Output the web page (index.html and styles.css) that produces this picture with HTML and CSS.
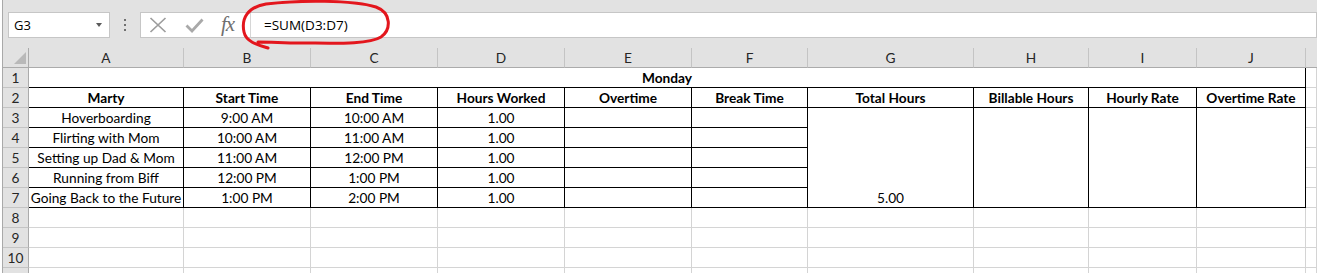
FILE: index.html
```html
<!DOCTYPE html>
<html lang="en">
<head>
    <meta charset="UTF-8">
    <title>Monday timesheet</title>
    <link rel="stylesheet" href="styles.css">
</head>
<body>
    <div class="app">
        <div class="toolbar">
            <div class="name-box">
                <span>G3</span>
                <span class="drop"></span>
            </div>
            <div class="dots"><i></i><i></i><i></i></div>
            <div class="fx-box">
                <svg class="ico-x" width="18" height="16" viewBox="0 0 18 16">
                    <path d="M1.5 1 L16.5 15 M16.5 1 L1.5 15" stroke="#9d9d9d" stroke-width="1.7" fill="none"/>
                </svg>
                <svg class="ico-ok" width="19" height="15" viewBox="0 0 19 15">
                    <path d="M1.5 7.5 L7 13 L17.5 1.5" stroke="#a9a9a9" stroke-width="2.8" fill="none"/>
                </svg>
                <span class="fx">fx</span>
            </div>
            <div class="formula">=SUM(D3:D7)</div>
        </div>

        <div class="sheet">
            <div class="corner">
                <svg width="12" height="12" viewBox="0 0 12 12"><polygon points="12,0 12,12 0,12" fill="#b9b9b9"/></svg>
            </div>
            <div class="col-hd">A</div>
            <div class="col-hd">B</div>
            <div class="col-hd">C</div>
            <div class="col-hd">D</div>
            <div class="col-hd">E</div>
            <div class="col-hd">F</div>
            <div class="col-hd">G</div>
            <div class="col-hd">H</div>
            <div class="col-hd">I</div>
            <div class="col-hd">J</div>
            <div class="col-hd last"></div>

            <!-- row 1 -->
            <div class="row-hd">1</div>
            <div class="cell title">Monday</div>
            <div class="cell"></div>

            <!-- row 2 -->
            <div class="row-hd">2</div>
            <div class="cell box bold">Marty</div>
            <div class="cell box bold">Start Time</div>
            <div class="cell box bold">End Time</div>
            <div class="cell box bold">Hours Worked</div>
            <div class="cell box bold">Overtime</div>
            <div class="cell box bold">Break Time</div>
            <div class="cell box bold">Total Hours</div>
            <div class="cell box bold">Billable Hours</div>
            <div class="cell box bold">Hourly Rate</div>
            <div class="cell box bold">Overtime Rate</div>
            <div class="cell"></div>

            <!-- row 3 -->
            <div class="row-hd">3</div>
            <div class="cell box">Hoverboarding</div>
            <div class="cell box">9:00 AM</div>
            <div class="cell box">10:00 AM</div>
            <div class="cell box">1.00</div>
            <div class="cell box"></div>
            <div class="cell box"></div>
            <div class="cell box merged total">5.00</div>
            <div class="cell box merged"></div>
            <div class="cell box merged"></div>
            <div class="cell box merged"></div>
            <div class="cell"></div>

            <!-- row 4 -->
            <div class="row-hd">4</div>
            <div class="cell box">Flirting with Mom</div>
            <div class="cell box">10:00 AM</div>
            <div class="cell box">11:00 AM</div>
            <div class="cell box">1.00</div>
            <div class="cell box"></div>
            <div class="cell box"></div>
            <div class="cell k"></div>

            <!-- row 5 -->
            <div class="row-hd">5</div>
            <div class="cell box">Setting up Dad &amp; Mom</div>
            <div class="cell box">11:00 AM</div>
            <div class="cell box">12:00 PM</div>
            <div class="cell box">1.00</div>
            <div class="cell box"></div>
            <div class="cell box"></div>
            <div class="cell k"></div>

            <!-- row 6 -->
            <div class="row-hd">6</div>
            <div class="cell box">Running from Biff</div>
            <div class="cell box">12:00 PM</div>
            <div class="cell box">1:00 PM</div>
            <div class="cell box">1.00</div>
            <div class="cell box"></div>
            <div class="cell box"></div>
            <div class="cell k"></div>

            <!-- row 7 -->
            <div class="row-hd">7</div>
            <div class="cell box">Going Back to the Future</div>
            <div class="cell box">1:00 PM</div>
            <div class="cell box">2:00 PM</div>
            <div class="cell box">1.00</div>
            <div class="cell box"></div>
            <div class="cell box"></div>
            <div class="cell k"></div>

            <!-- rows 8 - 11 -->
            <div class="row-hd">8</div>
            <div class="cell"></div><div class="cell"></div><div class="cell"></div><div class="cell"></div><div class="cell"></div>
            <div class="cell"></div><div class="cell"></div><div class="cell"></div><div class="cell"></div><div class="cell"></div><div class="cell"></div>

            <div class="row-hd">9</div>
            <div class="cell"></div><div class="cell"></div><div class="cell"></div><div class="cell"></div><div class="cell"></div>
            <div class="cell"></div><div class="cell"></div><div class="cell"></div><div class="cell"></div><div class="cell"></div><div class="cell"></div>

            <div class="row-hd">10</div>
            <div class="cell"></div><div class="cell"></div><div class="cell"></div><div class="cell"></div><div class="cell"></div>
            <div class="cell"></div><div class="cell"></div><div class="cell"></div><div class="cell"></div><div class="cell"></div><div class="cell"></div>

            <div class="row-hd"></div>
            <div class="cell"></div><div class="cell"></div><div class="cell"></div><div class="cell"></div><div class="cell"></div>
            <div class="cell"></div><div class="cell"></div><div class="cell"></div><div class="cell"></div><div class="cell"></div><div class="cell"></div>
        </div>

        <!-- hand drawn annotation round the formula -->
        <svg class="scribble" width="420" height="60" viewBox="0 0 420 60">
            <path d="M268 48 C258 45 246 42 244 32 C241 18 248 7 266 4 C300 0 352 0 376 7 C392 13 391 30 381 37 C368 45 330 43 300 43 C284 43 272 42 258 42"
                  stroke="#e3161d" stroke-width="3" fill="none" stroke-linecap="round"/>
        </svg>
    </div>
</body>
</html>
```

FILE: styles.css
```css
body {
    margin: 0;
    background: #fff;
    overflow: hidden;
}
.app {
    position: relative;
    margin-left: 2px;
    border-left: 1px solid #a9a9a9;
    height: 273px;
    overflow: hidden;
    background: #e2e2e2;
}
.toolbar {
    height: 48px;
    display: flex;
    align-items: flex-start;
    padding-top: 12px;
    padding-left: 5px;
    box-sizing: border-box;
}
.name-box {
    width: 102px;
    height: 26px;
    box-sizing: border-box;
    background: #fff;
    border: 1px solid #c6c6c6;
    display: flex;
    align-items: center;
    justify-content: space-between;
    padding: 0 7px 0 5px;
    font-family: "Open Sans", sans-serif;
    font-size: 13px;
    color: #000;
}
.drop {
    width: 0;
    height: 0;
    border-left: 3.5px solid transparent;
    border-right: 3.5px solid transparent;
    border-top: 4px solid #5a5a5a;
}
.dots {
    width: 30px;
    height: 26px;
    display: flex;
    flex-direction: column;
    align-items: center;
    justify-content: center;
    gap: 3px;
}
.dots i {
    display: block;
    width: 2px;
    height: 2px;
    background: #707070;
}
.fx-box {
    width: 111px;
    height: 26px;
    box-sizing: border-box;
    background: #fff;
    border: 1px solid #c6c6c6;
    border-right: 1px solid #d6d6d6;
    display: flex;
    align-items: center;
    padding-left: 8px;
}
.ico-x {
    margin-right: 18px;
}
.ico-ok {
    margin-right: 17px;
    margin-top: 1px;
}
.fx {
    font-family: "Liberation Serif", serif;
    font-style: italic;
    font-size: 21px;
    color: #6f6f6f;
    letter-spacing: -1px;
    margin-top: -2px;
}
.formula {
    flex: 1;
    height: 26px;
    box-sizing: border-box;
    background: #fff;
    border: 1px solid #c6c6c6;
    border-left: none;
    padding-left: 13px;
    font-family: "Open Sans", sans-serif;
    font-size: 13.5px;
    line-height: 24px;
    color: #000;
}

.sheet {
    display: grid;
    grid-template-columns: 26px 155px 127px 127px 127px 127px 116px 166px 115px 108px 109px 1fr;
    grid-auto-rows: 20px;
    background: #fff;
    font-family: Lato, "Liberation Sans", sans-serif;
    font-size: 13.7px;
    color: #000;
}
.sheet > div {
    box-sizing: border-box;
}
.corner {
    background: #e2e2e2;
    border-right: 1px solid #ababab;
    border-bottom: 1px solid #ababab;
    display: flex;
    align-items: flex-end;
    justify-content: flex-end;
    padding: 0 2px 3px 0;
}
.col-hd {
    background: #e2e2e2;
    border-right: 1px solid #c4c4c4;
    border-bottom: 1px solid #ababab;
    text-align: center;
    line-height: 19px;
    color: #262626;
}
.col-hd.last {
    border-right: none;
}
.row-hd {
    background: #e2e2e2;
    border-right: 1px solid #ababab;
    border-bottom: 1px solid #c4c4c4;
    text-align: center;
    line-height: 19px;
    color: #262626;
}
.cell {
    border-right: 1px solid #d4d4d4;
    border-bottom: 1px solid #d4d4d4;
    text-align: center;
    line-height: 19px;
    white-space: nowrap;
    overflow: hidden;
}
.cell.box {
    border-right-color: #000;
    border-bottom-color: #000;
}
.cell.title {
    grid-column: span 10;
    font-weight: bold;
    border-right-color: #000;
    border-bottom-color: #000;
}
.bold {
    font-weight: bold;
}
.cell.merged {
    grid-row: span 5;
    display: flex;
    align-items: flex-end;
    justify-content: center;
}
.cell.k {
    grid-column: 12;
}

.scribble {
    position: absolute;
    left: -3px;
    top: 0;
    pointer-events: none;
}
```
